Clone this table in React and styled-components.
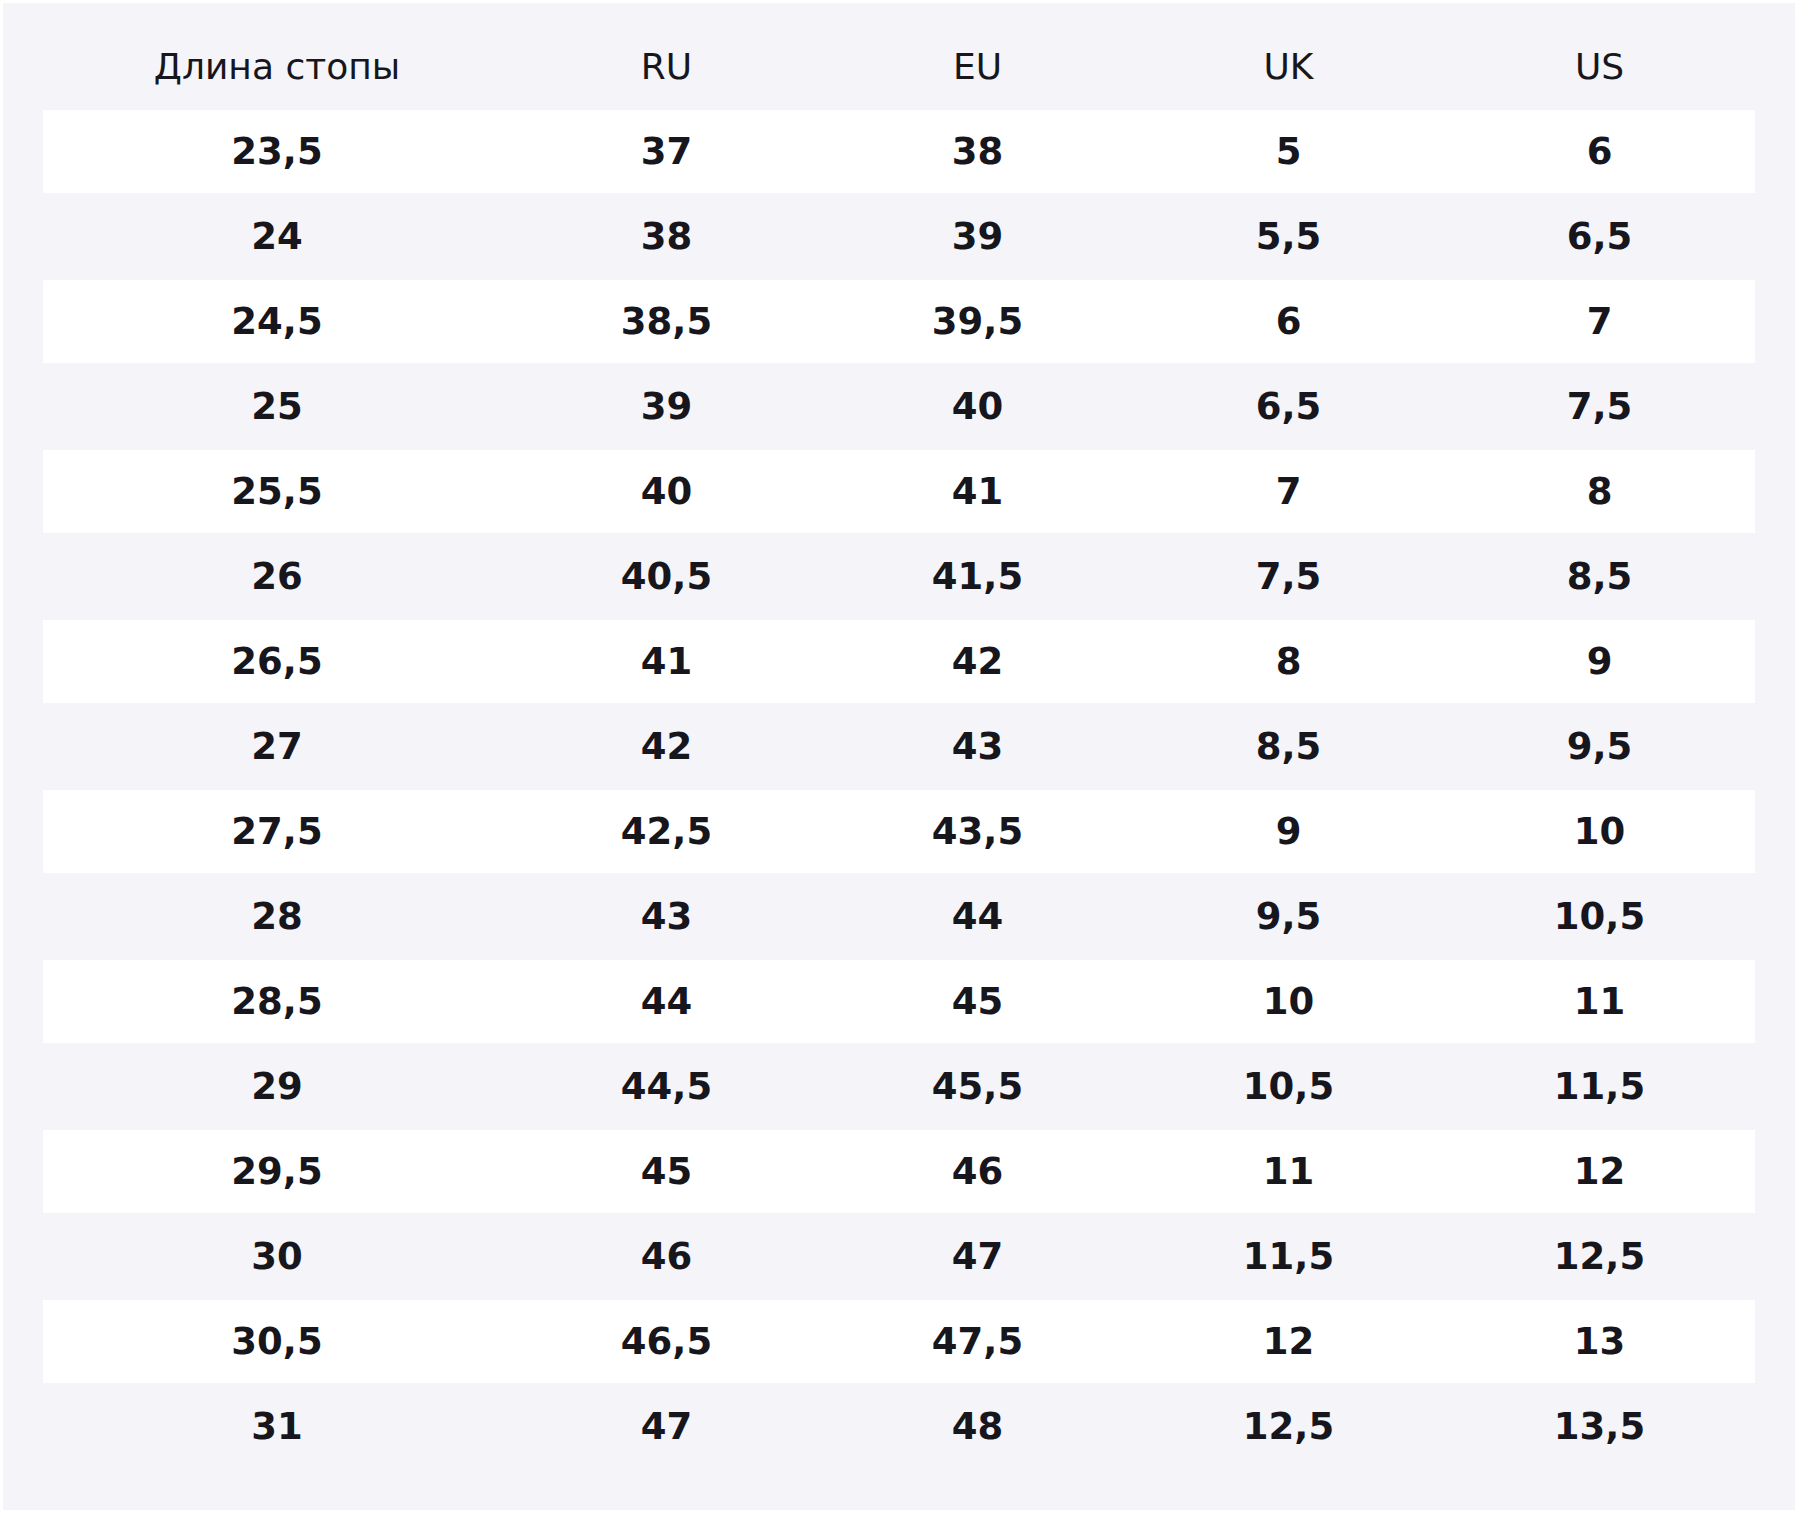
import styled, { createGlobalStyle } from 'styled-components';

const GlobalStyle = createGlobalStyle`
	body {
		margin: 3px;
		background: #ffffff;
		font-family: 'DejaVu Sans', 'Noto Sans', sans-serif;
		color: #16161c;
	}
`;

const sizes = [
	['23,5', '37', '38', '5', '6'],
	['24', '38', '39', '5,5', '6,5'],
	['24,5', '38,5', '39,5', '6', '7'],
	['25', '39', '40', '6,5', '7,5'],
	['25,5', '40', '41', '7', '8'],
	['26', '40,5', '41,5', '7,5', '8,5'],
	['26,5', '41', '42', '8', '9'],
	['27', '42', '43', '8,5', '9,5'],
	['27,5', '42,5', '43,5', '9', '10'],
	['28', '43', '44', '9,5', '10,5'],
	['28,5', '44', '45', '10', '11'],
	['29', '44,5', '45,5', '10,5', '11,5'],
	['29,5', '45', '46', '11', '12'],
	['30', '46', '47', '11,5', '12,5'],
	['30,5', '46,5', '47,5', '12', '13'],
	['31', '47', '48', '12,5', '13,5'],
];

const headers = ['Длина стопы', 'RU', 'EU', 'UK', 'US'];

const Panel = styled.div`
	background: #f4f4f9;
	padding: 22px 40px 42px;
	display: flex;
	flex-direction: column;
	gap: 2px;
`;

const Row = styled.div`
	display: grid;
	grid-template-columns: 468px repeat(4, 1fr);
	align-items: center;
	height: 83px;
	background: ${(p) => (p.$striped ? '#ffffff' : 'transparent')};
`;

const Cell = styled.div`
	text-align: center;
	font-size: ${(p) => (p.$head ? '36px' : '37px')};
	font-weight: ${(p) => (p.$head ? 400 : 700)};
	line-height: 1;
`;

export default function App() {
	return (
		<>
			<GlobalStyle />
			<Panel>
				<Row>
					{headers.map((h) => (
						<Cell key={h} $head>
							{h}
						</Cell>
					))}
				</Row>
				{sizes.map((row, i) => (
					<Row key={row[0]} $striped={i % 2 === 0}>
						{row.map((v, j) => (
							<Cell key={j}>{v}</Cell>
						))}
					</Row>
				))}
			</Panel>
		</>
	);
}
